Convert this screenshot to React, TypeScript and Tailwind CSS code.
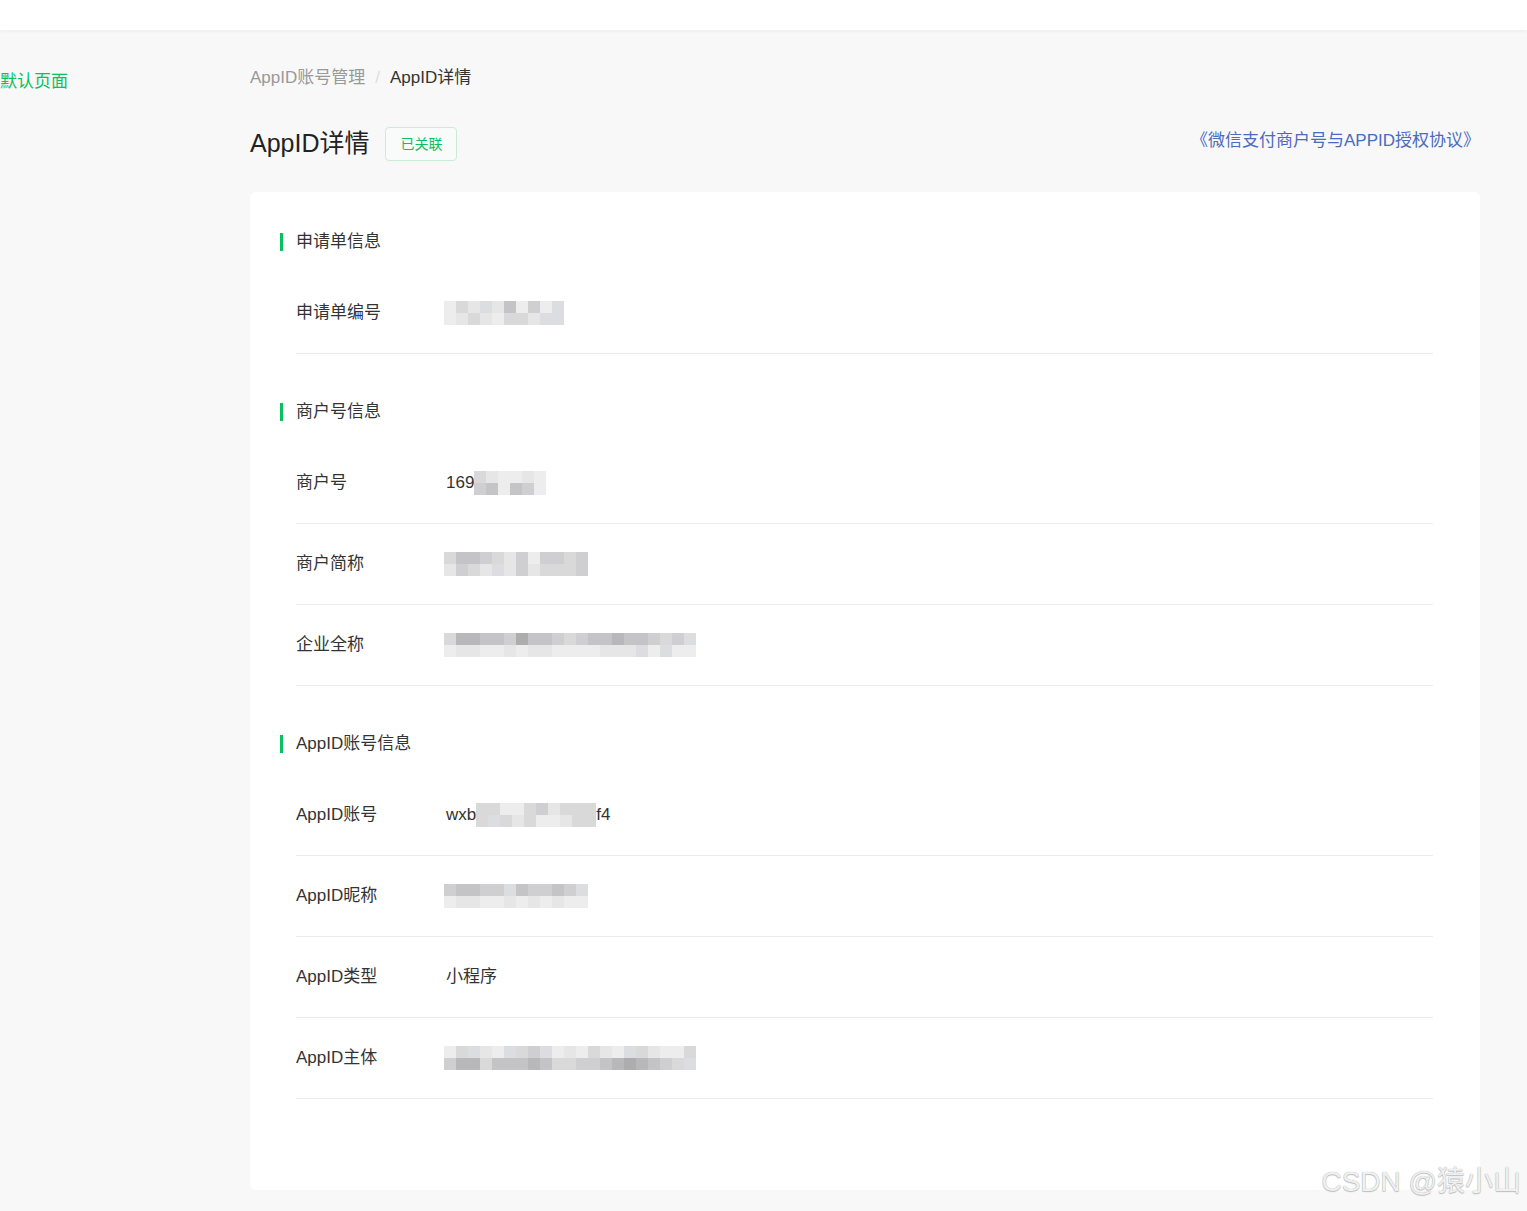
import React from 'react';

// 马赛克色板（模糊处理的敏感信息）
const PALETTE = [
  'bg-[#e6e6e6]',
  'bg-[#d9d9d9]',
  'bg-[#cfcfd1]',
  'bg-[#c4c4c6]',
  'bg-[#b8b8ba]',
  'bg-[#ededed]',
  'bg-[#dcdde0]',
  'bg-[#adadae]',
];

const Mosaic = ({ top, bottom }: { top: number[]; bottom: number[] }) => (
  <div className="flex flex-col">
    <div className="flex">
      {top.map((c, i) => (
        <div key={i} className={`w-3 h-3 ${PALETTE[c]}`} />
      ))}
    </div>
    <div className="flex">
      {bottom.map((c, i) => (
        <div key={i} className={`w-3 h-3 ${PALETTE[c]}`} />
      ))}
    </div>
  </div>
);

const SectionTitle = ({ children }: { children: React.ReactNode }) => (
  <div className="flex items-center h-6 -ml-4 mb-[19px]">
    <span className="w-[3px] h-[18px] bg-[#07c160] mr-[13px]" />
    <span className="text-[17px] text-[#333]">{children}</span>
  </div>
);

const Row = ({ label, children }: { label: string; children: React.ReactNode }) => (
  <div className="flex items-center h-[81px] border-b border-[#ececec]">
    <div className="w-[148px] text-[17px] text-[#333]">{label}</div>
    <div className="flex items-center text-[17px] text-[#333]">{children}</div>
  </div>
);

export default function App() {
  return (
    <div
      className="min-h-screen bg-[#f8f8f8] relative"
      style={{ fontFamily: '"Liberation Sans", "Noto Sans CJK SC", sans-serif' }}
    >
      <div className="h-[30px] bg-white shadow-[0_1px_4px_rgba(0,0,0,0.05)]" />

      <div className="flex">
        {/* 侧边栏 */}
        <div className="w-[250px] shrink-0 pt-[40px]">
          <div className="text-[17px] text-[#07c160] leading-6">默认页面</div>
        </div>

        {/* 主体 */}
        <div className="w-[1230px] pt-[36px] pb-[21px]">
          <div className="flex items-center text-[17px] leading-6">
            <span className="text-[#999]">AppID账号管理</span>
            <span className="text-[#ddd] mx-[10px]">/</span>
            <span className="text-[#333]">AppID详情</span>
          </div>

          <div className="flex items-center justify-between mt-[35px]">
            <div className="flex items-center">
              <h1 className="text-[25px] text-[#222] font-normal">AppID详情</h1>
              <span className="ml-4 h-[34px] w-[72px] flex items-center justify-center text-sm text-[#07c160] border border-[#c9ecd7] rounded bg-[#f8fbf9]">
                已关联
              </span>
            </div>
            <a className="text-[17px] text-[#4a6bbf] -mt-[6px]">《微信支付商户号与APPID授权协议》</a>
          </div>

          <div className="mt-[29px] bg-white rounded-md pl-[46px] pr-[47px] pb-[91px] pt-[38px]">
            <SectionTitle>申请单信息</SectionTitle>
            <Row label="申请单编号">
              <Mosaic top={[5, 1, 0, 6, 0, 3, 5, 2, 5, 6]} bottom={[5, 0, 1, 0, 5, 1, 1, 0, 6, 6]} />
            </Row>

            <div className="pt-[46px]">
              <SectionTitle>商户号信息</SectionTitle>
              <Row label="商户号">
                <span className="ml-[2px]">169</span>
                <Mosaic top={[1, 0, 5, 5, 0, 5]} bottom={[2, 3, 5, 3, 2, 5]} />
              </Row>
              <Row label="商户简称">
                <Mosaic top={[1, 3, 3, 2, 1, 0, 2, 5, 2, 2, 1, 2]} bottom={[0, 2, 1, 0, 6, 0, 2, 0, 1, 1, 1, 2]} />
              </Row>
              <Row label="企业全称">
                <Mosaic
                  top={[1, 4, 4, 3, 3, 2, 7, 3, 3, 2, 1, 2, 3, 3, 4, 3, 3, 2, 1, 2, 6]}
                  bottom={[5, 0, 0, 5, 5, 0, 5, 0, 0, 5, 5, 5, 5, 0, 0, 0, 6, 5, 6, 5, 5]}
                />
              </Row>
            </div>

            <div className="pt-[46px]">
              <SectionTitle>AppID账号信息</SectionTitle>
              <Row label="AppID账号">
                <span className="ml-[2px]">wxb</span>
                <Mosaic top={[1, 1, 5, 5, 1, 2, 0, 1, 1, 1]} bottom={[1, 6, 1, 0, 1, 5, 5, 0, 1, 1]} />
                <span>f4</span>
              </Row>
              <Row label="AppID昵称">
                <Mosaic top={[2, 3, 3, 2, 2, 6, 3, 2, 2, 3, 2, 6]} bottom={[5, 0, 0, 5, 5, 0, 5, 0, 5, 0, 5, 5]} />
              </Row>
              <Row label="AppID类型">
                <span className="ml-[2px]">小程序</span>
              </Row>
              <Row label="AppID主体">
                <Mosaic
                  top={[5, 1, 6, 0, 5, 6, 1, 2, 6, 5, 0, 5, 1, 0, 5, 6, 1, 0, 5, 5, 1]}
                  bottom={[2, 4, 4, 1, 3, 3, 3, 4, 3, 1, 1, 2, 2, 3, 4, 7, 4, 3, 2, 1, 6]}
                />
              </Row>
            </div>
          </div>
        </div>
      </div>

      {/* 水印 */}
      <div className="absolute right-[6px] bottom-[8px] text-[28px] text-[#f0f0f0] [text-shadow:0_0_1px_#999,0_1px_1px_#c4c4c4]">
        CSDN @猿小山
      </div>
    </div>
  );
}
